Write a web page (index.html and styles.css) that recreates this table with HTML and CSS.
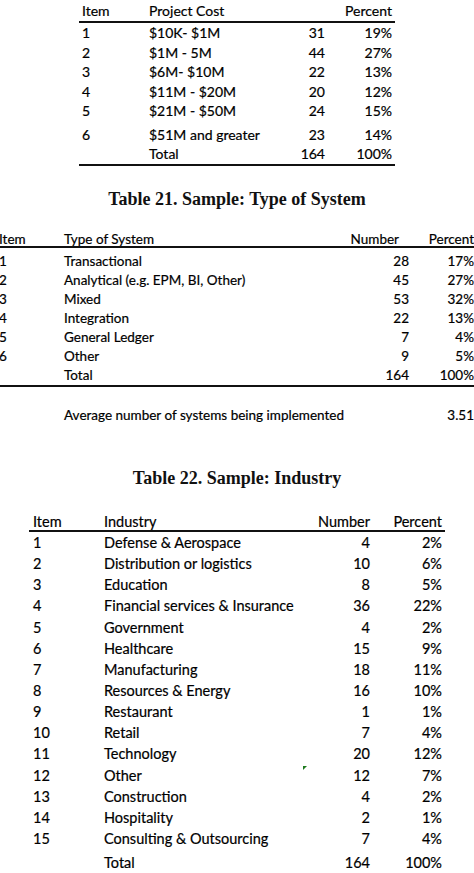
FILE: index.html
```html
<!DOCTYPE html>
<html>
<head>
<meta charset="utf-8">
<link rel="stylesheet" href="styles.css">
</head>
<body>
<div class="page">
  <div class="tbl t1">
    <div class="row head"><span class="it">Item</span><span>Project Cost</span><span class="r"></span><span class="r">Percent</span></div>
    <div class="row"><span class="it">1</span><span>$10K- $1M</span><span class="r">31</span><span class="r">19%</span></div>
    <div class="row"><span class="it">2</span><span>$1M - 5M</span><span class="r">44</span><span class="r">27%</span></div>
    <div class="row"><span class="it">3</span><span>$6M- $10M</span><span class="r">22</span><span class="r">13%</span></div>
    <div class="row"><span class="it">4</span><span>$11M - $20M</span><span class="r">20</span><span class="r">12%</span></div>
    <div class="row"><span class="it">5</span><span>$21M - $50M</span><span class="r">24</span><span class="r">15%</span></div>
    <div class="row gap"><span class="it">6</span><span>$51M and greater</span><span class="r">23</span><span class="r">14%</span></div>
    <div class="row total"><span class="it"></span><span>Total</span><span class="r">164</span><span class="r">100%</span></div>
  </div>

  <h2 class="title title21">Table 21. Sample: Type of System</h2>

  <div class="tbl t2">
    <div class="row head"><span class="it">Item</span><span>Type of System</span><span class="r num-head">Number</span><span class="r">Percent</span></div>
    <div class="body">
      <div class="row"><span class="it">1</span><span>Transactional</span><span class="r">28</span><span class="r">17%</span></div>
      <div class="row"><span class="it">2</span><span>Analytical (e.g. EPM, BI, Other)</span><span class="r">45</span><span class="r">27%</span></div>
      <div class="row"><span class="it">3</span><span>Mixed</span><span class="r">53</span><span class="r">32%</span></div>
      <div class="row"><span class="it">4</span><span>Integration</span><span class="r">22</span><span class="r">13%</span></div>
      <div class="row"><span class="it">5</span><span>General Ledger</span><span class="r">7</span><span class="r">4%</span></div>
      <div class="row"><span class="it">6</span><span>Other</span><span class="r">9</span><span class="r">5%</span></div>
      <div class="row"><span class="it"></span><span>Total</span><span class="r">164</span><span class="r">100%</span></div>
    </div>
  </div>
  <div class="avg"><span>Average number of systems being implemented</span><span class="r">3.51</span></div>

  <h2 class="title title22">Table 22. Sample: Industry</h2>

  <div class="tbl t3">
    <div class="row head"><span class="it">Item</span><span>Industry</span><span class="r">Number</span><span class="r">Percent</span></div>
    <div class="row"><span class="it">1</span><span>Defense &amp; Aerospace</span><span class="r">4</span><span class="r">2%</span></div>
    <div class="row"><span class="it">2</span><span>Distribution or logistics</span><span class="r">10</span><span class="r">6%</span></div>
    <div class="row"><span class="it">3</span><span>Education</span><span class="r">8</span><span class="r">5%</span></div>
    <div class="row"><span class="it">4</span><span>Financial services &amp; Insurance</span><span class="r">36</span><span class="r">22%</span></div>
    <div class="row"><span class="it">5</span><span>Government</span><span class="r">4</span><span class="r">2%</span></div>
    <div class="row"><span class="it">6</span><span>Healthcare</span><span class="r">15</span><span class="r">9%</span></div>
    <div class="row"><span class="it">7</span><span>Manufacturing</span><span class="r">18</span><span class="r">11%</span></div>
    <div class="row"><span class="it">8</span><span>Resources &amp; Energy</span><span class="r">16</span><span class="r">10%</span></div>
    <div class="row"><span class="it">9</span><span>Restaurant</span><span class="r">1</span><span class="r">1%</span></div>
    <div class="row"><span class="it">10</span><span>Retail</span><span class="r">7</span><span class="r">4%</span></div>
    <div class="row"><span class="it">11</span><span>Technology</span><span class="r">20</span><span class="r">12%</span></div>
    <div class="row"><span class="it">12</span><span>Other</span><span class="r">12</span><span class="r">7%</span></div>
    <div class="row"><span class="it">13</span><span>Construction</span><span class="r">4</span><span class="r">2%</span></div>
    <div class="row"><span class="it">14</span><span>Hospitality</span><span class="r">2</span><span class="r">1%</span></div>
    <div class="row"><span class="it">15</span><span>Consulting &amp; Outsourcing</span><span class="r">7</span><span class="r">4%</span></div>
    <div class="row total"><span class="it"></span><span>Total</span><span class="r">164</span><span class="r">100%</span></div>
  </div>
  <span class="marker"></span>
</div>
</body>
</html>
```

FILE: styles.css
```css
html, body {
  margin: 0;
  padding: 0;
  background: #fff;
  overflow: hidden;
}
.page {
  position: relative;
  width: 474px;
  height: 873px;
  overflow: hidden;
  font-family: Lato, "Liberation Sans", sans-serif;
  font-size: 14px;
  color: #000;
  -webkit-text-stroke: 0.2px #000;
}
.row {
  display: grid;
  white-space: nowrap;
}
.r { text-align: right; }

/* Table 1 */
.t1 {
  margin-left: 79px;
  width: 316px;
  border-bottom: 2px solid #111;
}
.t1 .row {
  grid-template-columns: 70px 116px 60px 67px;
  line-height: 19.5px;
}
.t1 .it { padding-left: 3px; }
.t1 .row.head {
  line-height: 21px;
  border-bottom: 2px solid #111;
}
.t1 .row.gap { padding-top: 4px; }
.t1 .row.total { line-height: 20px; }

/* Titles */
.title {
  margin: 0;
  font-family: "Liberation Serif", "Times New Roman", serif;
  font-weight: bold;
  font-size: 18px;
  line-height: 20px;
  text-align: center;
  color: #111;
  -webkit-text-stroke: 0;
}
.title21 { margin-top: 23px; }
.title22 { margin-top: 43.5px; }

/* Table 2 */
.t2 {
  margin-top: 23px;
  margin-left: -4px;
  width: 482px;
  font-size: 13.5px;
  border-bottom: 2px solid #111;
}
.t2 .row {
  grid-template-columns: 68px 285px 60px 65px;
  line-height: 19px;
}
.t2 .it { padding-left: 3px; }
.t2 .row.head {
  line-height: 14px;
  border-bottom: 2px solid #111;
}
.t2 .num-head { padding-right: 10px; }
.t2 .body { padding-top: 3.5px; }

.avg {
  display: grid;
  grid-template-columns: 345px 65px;
  margin-top: 19px;
  margin-left: 64px;
  font-size: 13.5px;
  line-height: 19px;
  white-space: nowrap;
}

/* Table 3 */
.t3 {
  margin-top: 26px;
  margin-left: 29px;
  width: 416px;
  font-size: 14.5px;
}
.t3 .row {
  grid-template-columns: 75px 206px 60px 72px;
  line-height: 21.14px;
}
.t3 .it { padding-left: 4px; }
.t3 .row.head {
  line-height: 16px;
  border-bottom: 2px solid #111;
}
.t3 .row.total {
  padding-top: 3px;
  line-height: 21px;
}

.marker {
  position: absolute;
  left: 303px;
  top: 766px;
  width: 0;
  height: 0;
  border-top: 4px solid #1e7a1e;
  border-right: 4px solid transparent;
  -webkit-text-stroke: 0;
}
```
